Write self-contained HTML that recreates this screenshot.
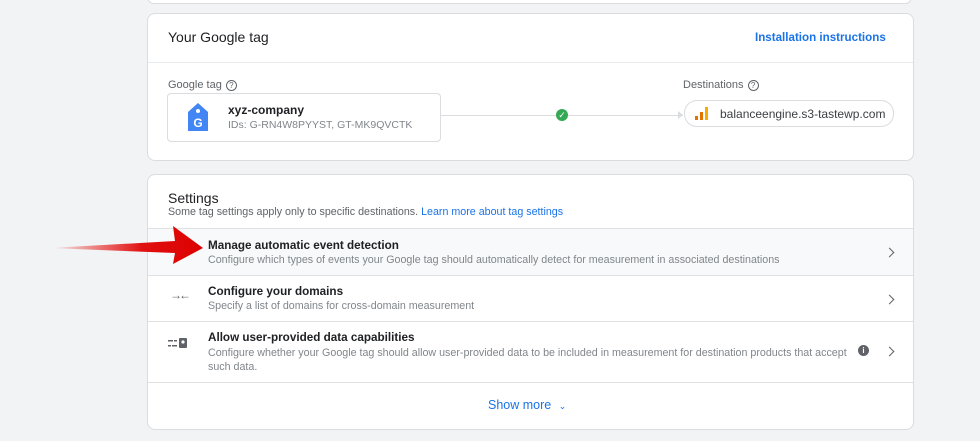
<!DOCTYPE html>
<html><head><style>
body{margin:0;width:980px;height:441px;background:#f1f3f4;font-family:"Liberation Sans",Arial,sans-serif;position:relative;overflow:hidden;color:#202124}
.card{position:absolute;left:147px;width:767px;background:#fff;border:1px solid #dadce0;border-radius:8px;box-sizing:border-box}
.abs{position:absolute}
.row{position:absolute;left:0;right:0;border-top:1px solid #e0e0e0}
.t{font-size:11.7px;font-weight:bold;color:#202124;position:absolute;left:60px}
.s{font-size:10.7px;color:#80868b;position:absolute;left:60px}
.chev{position:absolute;right:20px;width:6px;height:6px;border-right:1.6px solid #5f6368;border-top:1.6px solid #5f6368;transform:rotate(45deg)}
.q{display:inline-block;width:9px;height:9px;border:1px solid #5f6368;border-radius:50%;font-size:8px;line-height:9px;text-align:center;color:#5f6368;vertical-align:middle;margin-left:4px}
</style></head><body>
<div class="abs" style="left:147px;top:-10px;width:763px;height:12px;background:#fff;border:1px solid #dadce0;border-radius:8px"></div>

<div class="card" style="top:13px;height:148px">
  <div class="abs" style="left:20px;top:15px;font-size:14px">Your Google tag</div>
  <div class="abs" style="left:607px;top:17px;font-size:11.6px;color:#1a73e8;font-weight:bold">Installation instructions</div>
  <div class="abs" style="left:0;right:0;top:48px;border-top:1px solid #e8eaed"></div>
  <div class="abs" style="left:20px;top:65px;font-size:11px;color:#5f6368">Google tag<span class="q">?</span></div>
  <div class="abs" style="left:19px;top:79px;width:272px;height:47px;border:1px solid #dadce0;border-radius:4px">
    <svg class="abs" style="left:20px;top:9px" width="20" height="28" viewBox="0 0 20 28"><path d="M10 0 L20 9 V28 H0 V9 Z" fill="#4285f4"/><circle cx="10" cy="8" r="2" fill="#fff"/><text x="10" y="24" font-size="12" font-weight="bold" fill="#fff" text-anchor="middle" font-family="Liberation Sans">G</text></svg>
    <div class="abs" style="left:60px;top:9px;font-size:12px;font-weight:bold">xyz-company</div>
    <div class="abs" style="left:60px;top:25px;font-size:10.5px;color:#80868b">IDs: G-RN4W8PYYST, GT-MK9QVCTK</div>
  </div>
  <div class="abs" style="left:292px;right:230px;top:101px;border-top:1px solid #dadce0"></div>
  <div class="abs" style="left:408px;top:95px;width:12px;height:12px;border-radius:50%;background:#34a853;color:#fff;font-size:9px;line-height:12px;text-align:center">✓</div>
  <div class="abs" style="left:530px;top:97px;width:0;height:0;border-left:5px solid #dadce0;border-top:4px solid transparent;border-bottom:4px solid transparent"></div>
  <div class="abs" style="left:535px;top:65px;font-size:11px;color:#5f6368">Destinations<span class="q">?</span></div>
  <div class="abs" style="left:536px;top:86px;width:208px;height:25px;border:1px solid #dadce0;border-radius:13px">
    <svg class="abs" style="left:10px;top:5px" width="14" height="14"><rect x="0" y="10" width="3" height="4" fill="#e37400"/><rect x="5" y="6" width="3" height="8" fill="#e37400"/><rect x="10" y="1" width="3" height="13" fill="#f9ab00"/></svg>
    <div class="abs" style="left:35px;top:6px;font-size:12px;color:#3c4043">balanceengine.s3-tastewp.com</div>
  </div>
</div>

<div class="card" style="top:174px;height:256px;overflow:hidden">
  <div class="abs" style="left:20px;top:15px;font-size:14px">Settings</div>
  <div class="abs" style="left:20px;top:31px;font-size:10.7px;color:#5f6368">Some tag settings apply only to specific destinations. <span style="color:#1a73e8">Learn more about tag settings</span></div>
  <div class="row" style="top:53px;height:47px;background:#f8f9fa">
    <div class="t" style="top:10px">Manage automatic event detection</div>
    <div class="s" style="top:25px">Configure which types of events your Google tag should automatically detect for measurement in associated destinations</div>
    <div class="chev" style="top:20px"></div>
  </div>
  <div class="row" style="top:100px;height:46px">
    <div class="abs" style="left:22px;top:12px;font-size:12px;color:#5f6368;font-weight:bold;letter-spacing:-3px">→←</div>
    <div class="t" style="top:9px">Configure your domains</div>
    <div class="s" style="top:24px">Specify a list of domains for cross-domain measurement</div>
    <div class="chev" style="top:20px"></div>
  </div>
  <div class="row" style="top:146px;height:61px">
    <svg class="abs" style="left:20px;top:16px" width="20" height="12"><rect x="0" y="2" width="5" height="1.5" fill="#5f6368"/><rect x="6" y="2" width="3" height="1.5" fill="#5f6368"/><rect x="0" y="7" width="3" height="1.5" fill="#5f6368"/><rect x="4" y="7" width="5" height="1.5" fill="#5f6368"/><rect x="11" y="0" width="8" height="10" rx="1" fill="#5f6368"/><circle cx="15" cy="4" r="1.6" fill="#fff"/></svg>
    <div class="t" style="top:9px">Allow user-provided data capabilities</div>
    <div class="s" style="top:24px;width:650px;line-height:14px">Configure whether your Google tag should allow user-provided data to be included in measurement for destination products that accept such data.</div>
    <div class="abs" style="right:44px;top:23px;width:11px;height:11px;border-radius:50%;background:#5f6368;color:#fff;font-size:8px;line-height:11px;text-align:center;font-weight:bold">i</div>
    <div class="chev" style="top:26px"></div>
  </div>
  <div class="row" style="top:207px;height:49px">
    <div class="abs" style="left:340px;top:15px;font-size:12.5px;color:#1a73e8">Show more <span style="font-size:9px;margin-left:4px">⌄</span></div>
  </div>
</div>

<svg class="abs" style="left:45px;top:224px" width="160" height="42" viewBox="0 0 160 42">
<defs><linearGradient id="g" x1="0" x2="1"><stop offset="0" stop-color="#e00" stop-opacity="0"/><stop offset="0.6" stop-color="#e01010"/><stop offset="1" stop-color="#d00"/></linearGradient></defs>
<path d="M5 24 L130 17 L128 2 L158 24 L128 40 L130 29 Z" fill="url(#g)"/></svg>
</body></html>
